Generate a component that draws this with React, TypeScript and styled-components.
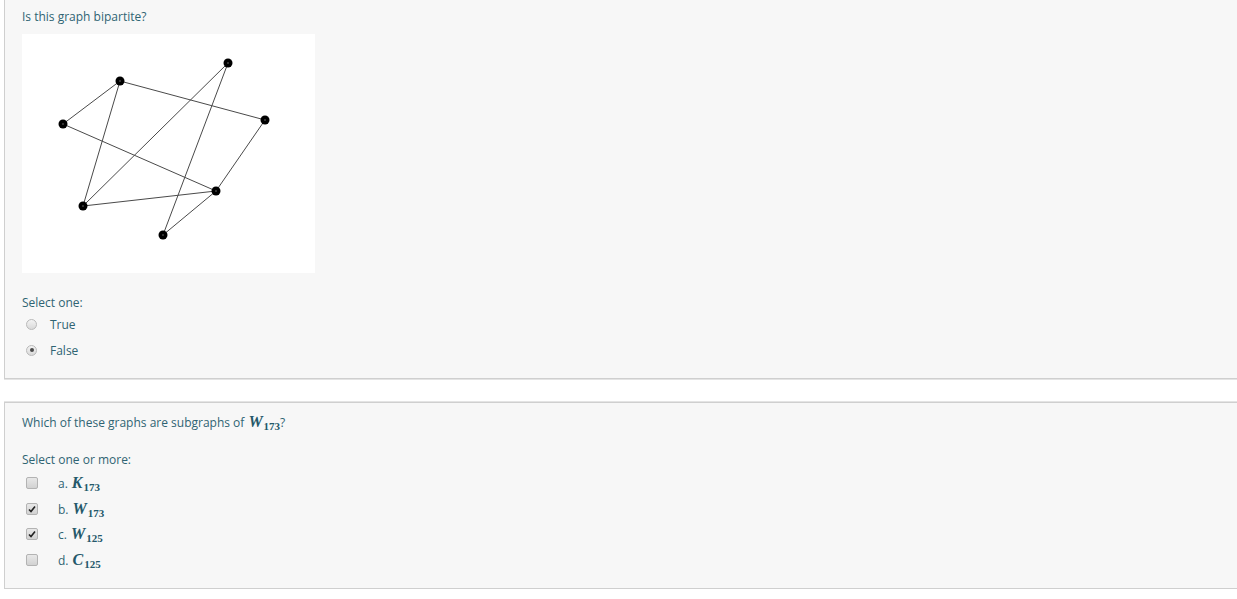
import styled, { createGlobalStyle } from "styled-components";

const GlobalStyle = createGlobalStyle`
    html, body {
        margin: 0;
        padding: 0;
        background: #ffffff;
    }
    body {
        font-family: "Open Sans", "Segoe UI", sans-serif;
        font-size: 12px;
        color: #2f6473;
        overflow: hidden;
    }
`;

const Page = styled.div`
    padding-left: 4px;
    display: flex;
    flex-direction: column;
    gap: 23px;
`;

const Card = styled.div<{ $cut?: boolean; $bottom: number }>`
    background: #f7f7f7;
    border: 1px solid #cfcfcf;
    border-right: none;
    border-top: ${(props) => (props.$cut ? "none" : "1px solid #cfcfcf")};
    box-shadow: 0 1px 0 #e4e4e4, 0 -1px 0 #e4e4e4;
    padding: ${(props) => (props.$cut ? "8px" : "10px")} 17px
        ${(props) => props.$bottom}px;
`;

const Question = styled.div`
    line-height: 18px;
    display: flex;
    align-items: baseline;
`;

const Figure = styled.div`
    margin-top: 8px;
    width: 293px;
    height: 239px;
    background: #ffffff;
`;

const Prompt = styled.div<{ $top: number }>`
    margin-top: ${(props) => props.$top}px;
    line-height: 18px;
`;

const Options = styled.div<{ $gap: number; $top: number }>`
    display: flex;
    flex-direction: column;
    gap: ${(props) => props.$gap}px;
    margin-top: ${(props) => props.$top}px;
`;

const Option = styled.label<{ $labelGap: number }>`
    display: flex;
    align-items: center;
    height: 18px;
    padding-left: 4px;
    gap: ${(props) => props.$labelGap}px;
`;

const Radio = styled.span<{ $checked?: boolean }>`
    position: relative;
    width: 9px;
    height: 9px;
    border-radius: 50%;
    border: 1px solid #b9b9b9;
    background: linear-gradient(#f3f3f3, #d9d9d9);
    flex-shrink: 0;
    &::after {
        content: "";
        display: ${(props) => (props.$checked ? "block" : "none")};
        position: absolute;
        left: 2.5px;
        top: 2.5px;
        width: 4px;
        height: 4px;
        border-radius: 50%;
        background: #4a4a4a;
    }
`;

const Box = styled.span`
    width: 10px;
    height: 10px;
    border-radius: 2px;
    border: 1px solid #b3b3b3;
    background: linear-gradient(#e8e8e8, #d2d2d2);
    display: flex;
    align-items: center;
    justify-content: center;
    flex-shrink: 0;
`;

const Math = styled.span`
    font-family: "Liberation Serif", "DejaVu Serif", serif;
    font-style: italic;
    font-weight: 700;
    font-size: 16px;
    color: #24586a;
    margin-left: 4px;
    & sub {
        font-style: normal;
        font-size: 11px;
        vertical-align: -3px;
        line-height: 0;
        margin-left: 1px;
    }
`;

const nodes: [number, number][] = [
    [98, 47],
    [206, 29],
    [41, 90],
    [243, 86],
    [61, 172],
    [194, 157],
    [141, 201],
];

const edges: [number, number][] = [
    [0, 2],
    [0, 3],
    [0, 4],
    [1, 4],
    [1, 6],
    [2, 5],
    [3, 5],
    [4, 5],
    [5, 6],
];

function Graph() {
    return (
        <svg width="293" height="239" viewBox="0 0 293 239">
            {edges.map(([a, b], i) => (
                <line
                    key={i}
                    x1={nodes[a][0]}
                    y1={nodes[a][1]}
                    x2={nodes[b][0]}
                    y2={nodes[b][1]}
                    stroke="#4a4a4a"
                    strokeWidth="1"
                />
            ))}
            {nodes.map(([x, y], i) => (
                <g key={i}>
                    <circle cx={x} cy={y} r="4.5" fill="#000" />
                    <circle cx={x} cy={y} r="0.7" fill="#888" />
                </g>
            ))}
        </svg>
    );
}

function Check() {
    return (
        <svg width="8" height="8" viewBox="0 0 8 8">
            <path d="M1 4.5 L3 6.5 L7 1.5" fill="none" stroke="#222" strokeWidth="1.6" />
        </svg>
    );
}

const choices = [
    { letter: "a.", sym: "K", sub: "173", checked: false },
    { letter: "b.", sym: "W", sub: "173", checked: true },
    { letter: "c.", sym: "W", sub: "125", checked: true },
    { letter: "d.", sym: "C", sub: "125", checked: false },
];

export default function App() {
    return (
        <>
            <GlobalStyle />
            <Page>
                <Card $cut $bottom={19}>
                    <Question>Is this graph bipartite?</Question>
                    <Figure>
                        <Graph />
                    </Figure>
                    <Prompt $top={21}>Select one:</Prompt>
                    <Options $gap={8} $top={3}>
                        <Option $labelGap={13}>
                            <Radio />
                            True
                        </Option>
                        <Option $labelGap={13}>
                            <Radio $checked />
                            False
                        </Option>
                    </Options>
                </Card>
                <Card $bottom={19}>
                    <Question>
                        Which of these graphs are subgraphs of
                        <Math>
                            W<sub>173</sub>
                        </Math>
                        ?
                    </Question>
                    <Prompt $top={19}>Select one or more:</Prompt>
                    <Options $gap={7.7} $top={5}>
                        {choices.map((c) => (
                            <Option key={c.letter} $labelGap={20}>
                                <Box>{c.checked && <Check />}</Box>
                                <span>
                                    {c.letter}
                                    <Math>
                                        {c.sym}
                                        <sub>{c.sub}</sub>
                                    </Math>
                                </span>
                            </Option>
                        ))}
                    </Options>
                </Card>
            </Page>
        </>
    );
}
